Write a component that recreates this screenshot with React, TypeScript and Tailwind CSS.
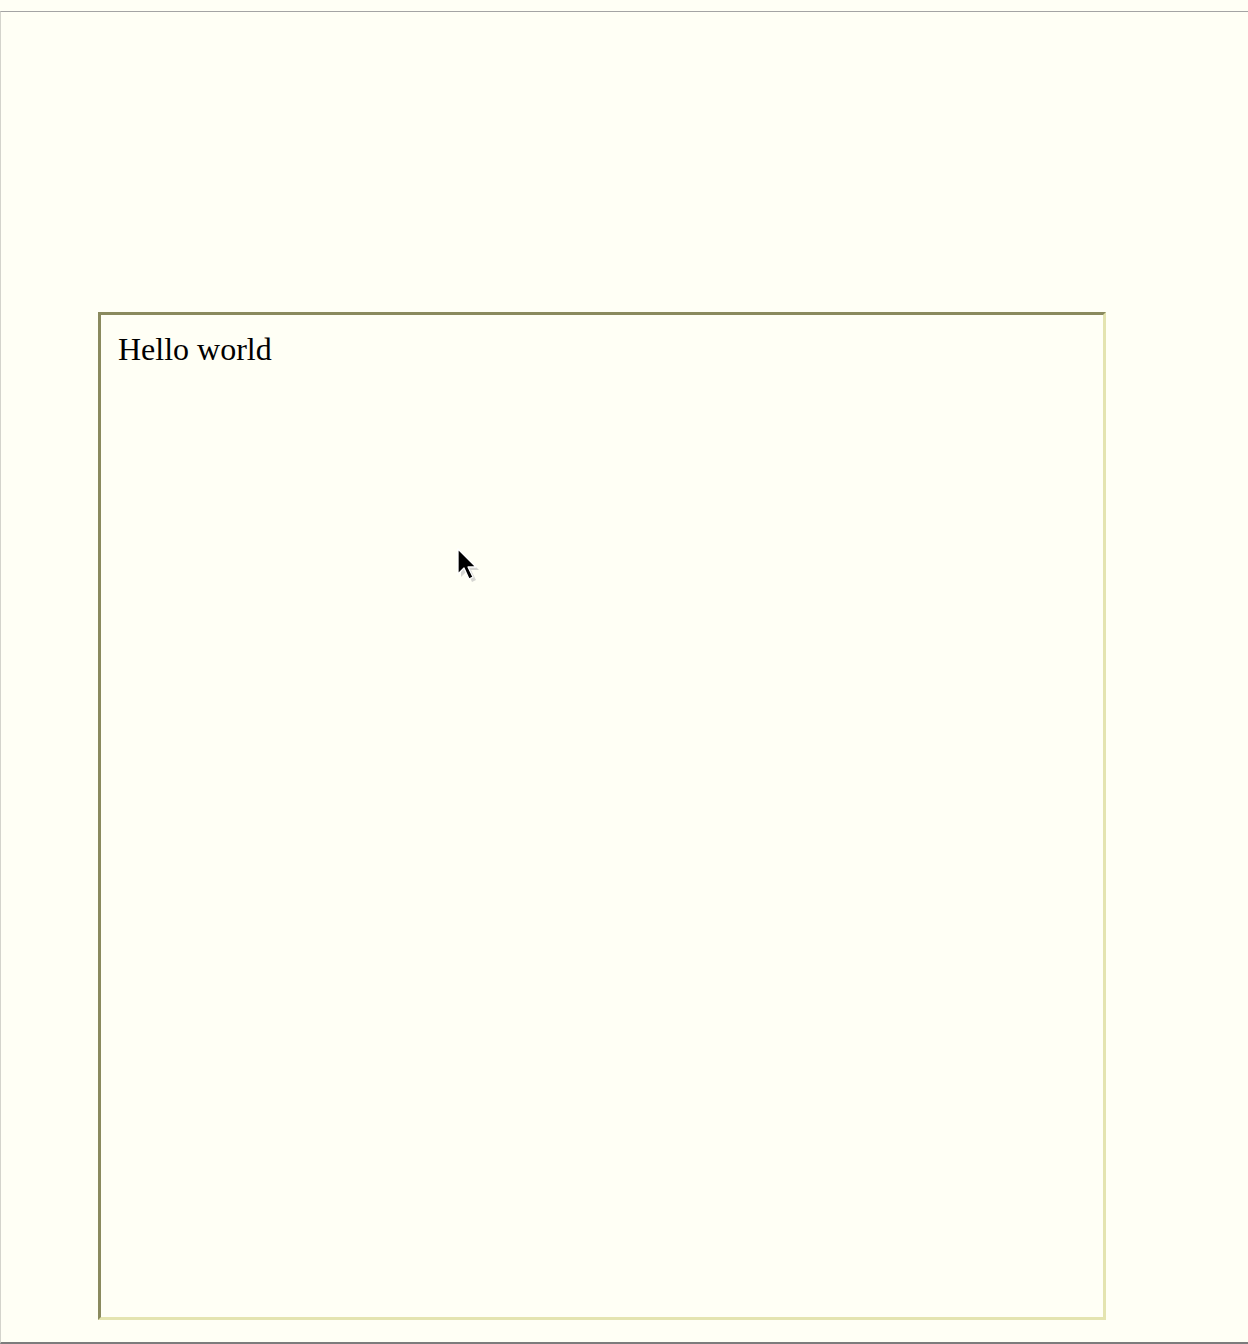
import React from 'react';

const Cursor: React.FC = () => (
  <svg
    className="absolute left-[455px] top-[546px]"
    width="28"
    height="40"
    viewBox="0 0 28 40"
  >
    {/* soft shadow */}
    <path d="M6 6 L6 31 L12 25 L17 36 L21 34 L16 24 L24 24 Z" fill="#b4b4b4" opacity="0.55" />
    <path
      d="M3 3 L3 28 L9 22 L14 33 L18 31 L13 21 L21 21 Z"
      fill="#000"
      stroke="#fff"
      strokeWidth="1.3"
      strokeLinejoin="round"
    />
  </svg>
);

const App: React.FC = () => {
  return (
    <div className="relative h-[1344px] w-[1248px] overflow-hidden bg-[#fffff5] pt-[11px] font-['Liberation_Serif',serif]">
      <div className="h-[1333px] border-t border-l border-b-2 border-t-[#a4a4a4] border-l-[#d4d4cc] border-b-[#7c7c7c] pt-[300px] pl-[97px]">
        <div className="h-[1008px] w-[1008px] border-[3px] border-t-[#8a8a5e] border-l-[#8a8a5e] border-r-[#e4e4b0] border-b-[#e4e4b0] py-4 pr-4 pl-[17px]">
          <p className="text-[32px] leading-[36px] text-black">Hello world</p>
        </div>
      </div>
      <Cursor />
    </div>
  );
};

export default App;
